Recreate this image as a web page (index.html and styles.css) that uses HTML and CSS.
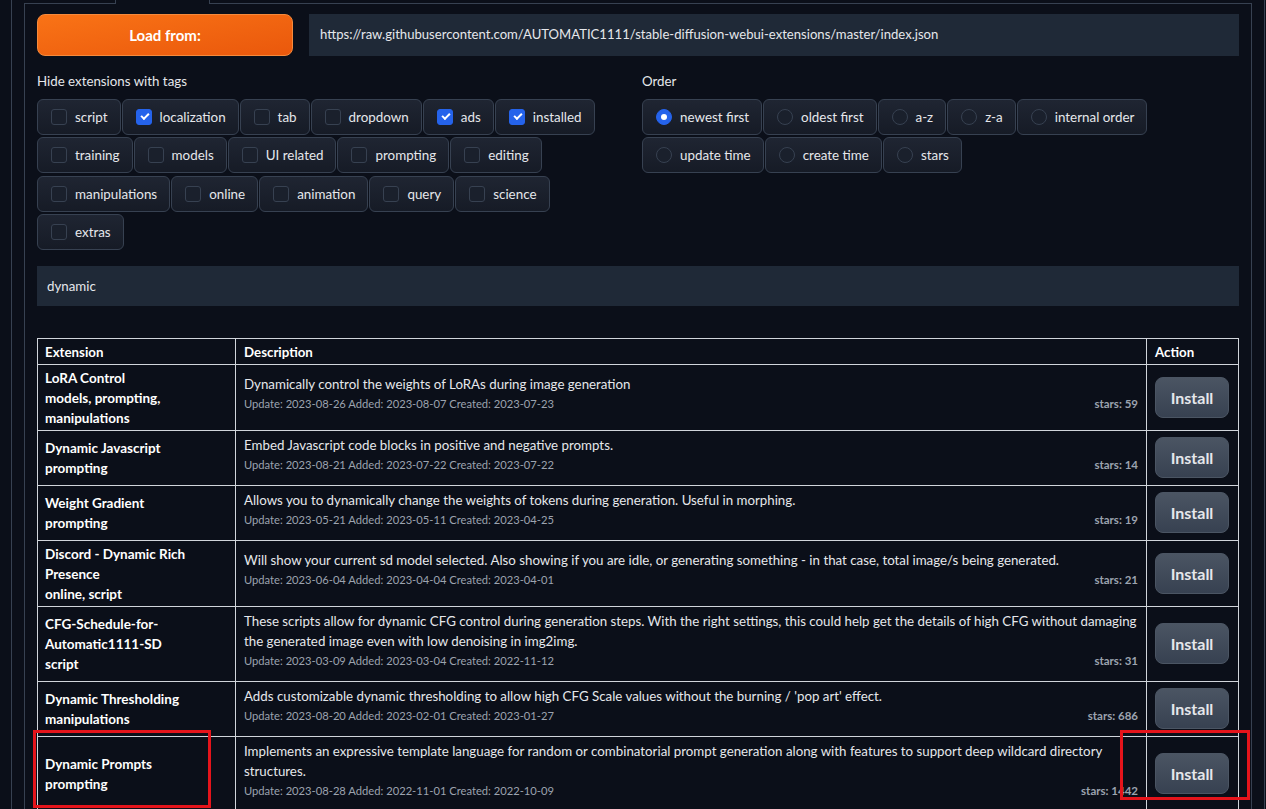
FILE: index.html
```html
<!DOCTYPE html>
<html lang="en">
<head>
	<meta charset="UTF-8">
	<title>Extensions</title>
	<link rel="stylesheet" href="styles.css">
</head>
<body>
	<div class="outer">
		<div class="tabnav">
			<div class="tabline first"></div>
			<div class="tabsel"></div>
			<div class="tabline rest"></div>
		</div>
		<div class="panel">
			<div class="loadrow">
				<div class="loadbtn">Load from:</div>
				<div class="textbox url">https://raw.githubusercontent.com/AUTOMATIC1111/stable-diffusion-webui-extensions/master/index.json</div>
			</div>

			<div class="filters">
				<div class="group">
					<div class="label">Hide extensions with tags</div>
					<div class="chips">
						<div class="chip"><i class="cb"></i>script</div>
						<div class="chip"><i class="cb on"></i>localization</div>
						<div class="chip"><i class="cb"></i>tab</div>
						<div class="chip"><i class="cb"></i>dropdown</div>
						<div class="chip"><i class="cb on"></i>ads</div>
						<div class="chip"><i class="cb on"></i>installed</div>
						<div class="chip"><i class="cb"></i>training</div>
						<div class="chip"><i class="cb"></i>models</div>
						<div class="chip"><i class="cb"></i>UI related</div>
						<div class="chip"><i class="cb"></i>prompting</div>
						<div class="chip"><i class="cb"></i>editing</div>
						<div class="chip"><i class="cb"></i>manipulations</div>
						<div class="chip"><i class="cb"></i>online</div>
						<div class="chip"><i class="cb"></i>animation</div>
						<div class="chip"><i class="cb"></i>query</div>
						<div class="chip"><i class="cb"></i>science</div>
						<div class="chip"><i class="cb"></i>extras</div>
					</div>
				</div>
				<div class="group">
					<div class="label">Order</div>
					<div class="chips">
						<div class="chip"><i class="rd on"></i>newest first</div>
						<div class="chip"><i class="rd"></i>oldest first</div>
						<div class="chip"><i class="rd"></i>a-z</div>
						<div class="chip"><i class="rd"></i>z-a</div>
						<div class="chip"><i class="rd"></i>internal order</div>
						<div class="chip"><i class="rd"></i>update time</div>
						<div class="chip"><i class="rd"></i>create time</div>
						<div class="chip"><i class="rd"></i>stars</div>
					</div>
				</div>
			</div>

			<div class="textbox search">dynamic</div>

			<table class="ext">
				<colgroup>
					<col class="c1">
					<col>
					<col class="c3">
				</colgroup>
				<tr>
					<th>Extension</th>
					<th>Description</th>
					<th>Action</th>
				</tr>
				<tr>
					<td class="name"><div>LoRA Control</div><div>models, prompting,<br>manipulations</div></td>
					<td class="desc">Dynamically control the weights of LoRAs during image generation
						<p class="info"><span>Update: 2023-08-26 Added: 2023-08-07 Created: 2023-07-23</span><b>stars: 59</b></p></td>
					<td class="act"><div class="install">Install</div></td>
				</tr>
				<tr>
					<td class="name"><div>Dynamic Javascript</div><div>prompting</div></td>
					<td class="desc">Embed Javascript code blocks in positive and negative prompts.
						<p class="info"><span>Update: 2023-08-21 Added: 2023-07-22 Created: 2023-07-22</span><b>stars: 14</b></p></td>
					<td class="act"><div class="install">Install</div></td>
				</tr>
				<tr>
					<td class="name"><div>Weight Gradient</div><div>prompting</div></td>
					<td class="desc">Allows you to dynamically change the weights of tokens during generation. Useful in morphing.
						<p class="info"><span>Update: 2023-05-21 Added: 2023-05-11 Created: 2023-04-25</span><b>stars: 19</b></p></td>
					<td class="act"><div class="install">Install</div></td>
				</tr>
				<tr>
					<td class="name"><div>Discord - Dynamic Rich<br>Presence</div><div>online, script</div></td>
					<td class="desc">Will show your current sd model selected. Also showing if you are idle, or generating something - in that case, total image/s being generated.
						<p class="info"><span>Update: 2023-06-04 Added: 2023-04-04 Created: 2023-04-01</span><b>stars: 21</b></p></td>
					<td class="act"><div class="install">Install</div></td>
				</tr>
				<tr>
					<td class="name"><div>CFG-Schedule-for-<br>Automatic1111-SD</div><div>script</div></td>
					<td class="desc">These scripts allow for dynamic CFG control during generation steps. With the right settings, this could help get the details of high CFG without damaging<br>the generated image even with low denoising in img2img.
						<p class="info"><span>Update: 2023-03-09 Added: 2023-03-04 Created: 2022-11-12</span><b>stars: 31</b></p></td>
					<td class="act"><div class="install">Install</div></td>
				</tr>
				<tr>
					<td class="name"><div>Dynamic Thresholding</div><div>manipulations</div></td>
					<td class="desc">Adds customizable dynamic thresholding to allow high CFG Scale values without the burning / 'pop art' effect.
						<p class="info"><span>Update: 2023-08-20 Added: 2023-02-01 Created: 2023-01-27</span><b>stars: 686</b></p></td>
					<td class="act"><div class="install">Install</div></td>
				</tr>
				<tr>
					<td class="name"><div>Dynamic Prompts</div><div>prompting</div></td>
					<td class="desc">Implements an expressive template language for random or combinatorial prompt generation along with features to support deep wildcard directory<br>structures.
						<p class="info"><span>Update: 2023-08-28 Added: 2022-11-01 Created: 2022-10-09</span><b>stars: 1442</b></p></td>
					<td class="act"><div class="install">Install</div></td>
				</tr>
			</table>
		</div>
	</div>

	<div class="mark mark-name"></div>
	<div class="mark mark-btn"></div>
</body>
</html>
```

FILE: styles.css
```css
*{
	margin: 0;
	padding: 0;
	box-sizing: border-box;
}
body{
	background: #0b0f19;
	color: #e5e7eb;
	font-family: Lato, "Noto Sans", sans-serif;
	font-size: 13.3px;
	overflow: hidden;
}
.outer{
	margin-left: 11px;
	width: 1254px;
	height: 830px;
	border-left: 1px solid #374151;
	border-right: 1px solid #374151;
	padding: 0 12px;
}
.tabnav{
	display: flex;
	height: 4px;
}
.tabline{
	border-bottom: 1px solid #374151;
}
.tabline.first{
	width: 91px;
}
.tabline.rest{
	flex: 1;
}
.tabsel{
	width: 95px;
	border-left: 1px solid #374151;
	border-right: 1px solid #374151;
}
.panel{
	border-left: 1px solid #374151;
	border-right: 1px solid #374151;
	padding: 10px 12px 0;
	height: 830px;
}

/* load row */
.loadrow{
	display: flex;
	gap: 16px;
}
.loadbtn{
	width: 256px;
	height: 42px;
	line-height: 40px;
	text-align: center;
	font-weight: 700;
	font-size: 15px;
	color: #fff;
	background: linear-gradient(to bottom right, #f97316, #ea580c);
	border: 1px solid #f68a3c;
	border-radius: 8px;
}
.textbox{
	background: #1f2937;
	color: #e5e7eb;
}
.url{
	flex: 1;
	height: 42px;
	line-height: 40px;
	padding-left: 11px;
	font-size: 13.1px;
}

/* filters */
.filters{
	display: grid;
	grid-template-columns: 597px 597px;
	gap: 8px;
	margin-top: 15px;
}
.label{
	line-height: 20px;
	margin-bottom: 8px;
}
.chips{
	display: flex;
	flex-wrap: wrap;
	gap: 2.3px 1px;
}
.chip{
	display: flex;
	align-items: center;
	height: 36px;
	padding: 0 12px 0 13px;
	border: 1px solid #374151;
	border-radius: 6px;
	background: linear-gradient(to bottom, #1f2532, #161b26);
	color: #e5e7eb;
	white-space: nowrap;
	font-size: 13.4px;
}
.cb, .rd{
	width: 16px;
	height: 16px;
	margin-right: 8px;
	border: 1px solid #374151;
	background: #1a202c;
	border-radius: 3px;
	position: relative;
	flex: none;
}
.rd{
	border-radius: 50%;
}
.cb.on, .rd.on{
	background: #2563eb;
	border-color: #2563eb;
}
.cb.on::after{
	content: "";
	position: absolute;
	left: 4px;
	top: 3px;
	width: 6px;
	height: 3px;
	border-left: 2px solid #fff;
	border-bottom: 2px solid #fff;
	transform: rotate(-45deg);
}
.rd.on::after{
	content: "";
	position: absolute;
	left: 4px;
	top: 4px;
	width: 6px;
	height: 6px;
	border-radius: 50%;
	background: #fff;
}

.search{
	margin-top: 16px;
	height: 40px;
	line-height: 40px;
	padding-left: 10px;
}

/* table */
.ext{
	margin-top: 32px;
	width: 100%;
	table-layout: fixed;
	border-collapse: collapse;
}
.ext .c1{
	width: 198px;
}
.ext .c3{
	width: 92px;
}
.ext th, .ext td{
	border: 1px solid #d1d5db;
	text-align: left;
	vertical-align: middle;
}
.ext th{
	padding: 3px 8px 2px;
	line-height: 20px;
	font-weight: 700;
	color: #fff;
}
.ext th:first-child{
	padding-left: 7px;
}
.ext .name{
	padding: 3px 8px 2px 7px;
	font-weight: 700;
	font-size: 13.5px;
	line-height: 20px;
	color: #fff;
}
.ext .desc{
	padding: 4px 8px;
	line-height: 20px;
	color: #e5e7eb;
}
.info{
	display: flex;
	justify-content: space-between;
	margin-bottom: 6px;
	font-size: 11.2px;
	color: #9ca3af;
}
.info b{
	font-size: 11.5px;
	font-weight: 700;
}
.ext .act{
	padding: 6px 8px;
}
.install{
	width: 74px;
	height: 41px;
	line-height: 39px;
	text-align: center;
	font-weight: 700;
	font-size: 16px;
	color: #e5e7eb;
	background: linear-gradient(to bottom, #4b5563, #374151);
	border: 1px solid #4b5563;
	border-radius: 8px;
}

/* red annotation frames */
.mark{
	position: absolute;
	border: 3px solid #e5141b;
}
.mark-name{
	left: 33px;
	top: 730px;
	width: 178px;
	height: 78px;
}
.mark-btn{
	left: 1120px;
	top: 730px;
	width: 130px;
	height: 70px;
}
```
